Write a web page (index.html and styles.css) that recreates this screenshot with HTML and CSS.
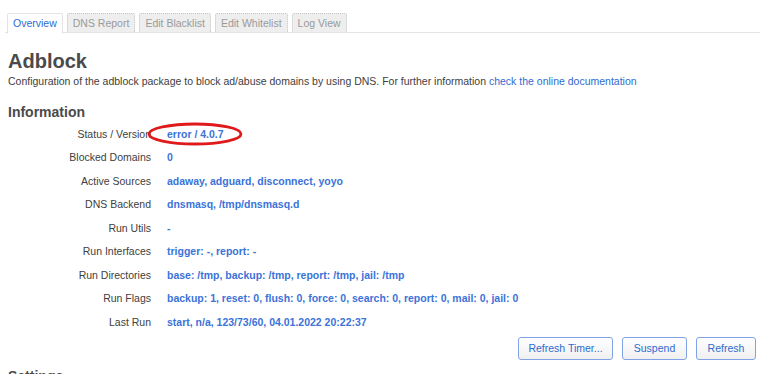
FILE: index.html
```html
<!DOCTYPE html>
<html>
<head>
<meta charset="utf-8">
<link rel="stylesheet" href="styles.css">
</head>
<body>
<div class="page">
  <ul class="tabs">
    <li class="tab active">Overview</li>
    <li class="tab">DNS Report</li>
    <li class="tab">Edit Blacklist</li>
    <li class="tab">Edit Whitelist</li>
    <li class="tab">Log View</li>
  </ul>
  <h1 class="title">Adblock</h1>
  <p class="desc">Configuration of the adblock package to block ad/abuse domains by using DNS. For further information <a class="link">check the online documentation</a></p>
  <h2 class="section">Information</h2>
  <div class="info">
    <div class="row"><span class="label">Status / Version</span><span class="value status">error / 4.0.7<svg class="ring" viewBox="0 0 96 24" width="96" height="24"><ellipse cx="48" cy="12" rx="46" ry="10" fill="none" stroke="#e01a1a" stroke-width="2.8"/></svg></span></div>
    <div class="row"><span class="label">Blocked Domains</span><span class="value">0</span></div>
    <div class="row"><span class="label">Active Sources</span><span class="value">adaway, adguard, disconnect, yoyo</span></div>
    <div class="row"><span class="label">DNS Backend</span><span class="value">dnsmasq, /tmp/dnsmasq.d</span></div>
    <div class="row"><span class="label">Run Utils</span><span class="value">-</span></div>
    <div class="row"><span class="label">Run Interfaces</span><span class="value">trigger: -, report: -</span></div>
    <div class="row"><span class="label">Run Directories</span><span class="value">base: /tmp, backup: /tmp, report: /tmp, jail: /tmp</span></div>
    <div class="row"><span class="label">Run Flags</span><span class="value">backup: 1, reset: 0, flush: 0, force: 0, search: 0, report: 0, mail: 0, jail: 0</span></div>
    <div class="row"><span class="label">Last Run</span><span class="value">start, n/a, 123/73/60, 04.01.2022 20:22:37</span></div>
  </div>
  <div class="actions">
    <button class="btn btn-timer">Refresh Timer...</button>
    <button class="btn btn-suspend">Suspend</button>
    <button class="btn btn-refresh">Refresh</button>
  </div>
  <h2 class="section settings">Settings</h2>
</div>
</body>
</html>
```
FILE: styles.css
```css
html, body {
  margin: 0;
  padding: 0;
  background: #fff;
}
body {
  font-family: "Liberation Sans", Arial, sans-serif;
  color: #404040;
  overflow: hidden;
  height: 374px;
}
.page {
  padding: 13px 8px 0 8px;
}
.tabs {
  list-style: none;
  margin: 0 0 0 -3px;
  padding: 0 0 0 2px;
  display: flex;
  gap: 4px;
  border-bottom: 1px solid #e4e4e4;
  height: 19px;
}
.tab {
  font-size: 10.5px;
  line-height: 18px;
  height: 18px;
  padding: 0 5px;
  color: #9a9a9a;
  background: #eeeeee;
  border: 1px dotted #c8c8c8;
  border-bottom: none;
  border-radius: 2px 2px 0 0;
}
.tab.active {
  color: #2f6bd0;
  background: #fff;
  border: 1px solid #e4e4e4;
  border-bottom: 1px solid #fff;
  height: 19px;
}
.title {
  font-size: 20px;
  font-weight: bold;
  color: #4a4a4a;
  margin: 16px 0 0 0;
  line-height: 24px;
}
.desc {
  font-size: 10.5px;
  margin: 0;
  line-height: 16px;
  color: #404040;
}
.link {
  color: #2f6bd0;
}
.section {
  font-size: 14px;
  font-weight: bold;
  color: #4a4a4a;
  margin: 14px 0 0 0;
  line-height: 18px;
}
.info {
  display: flex;
  flex-direction: column;
  margin-top: 1px;
}
.row {
  display: flex;
  align-items: center;
  height: 23.5px;
  font-size: 10.5px;
}
.label {
  width: 143px;
  text-align: right;
  color: #404040;
}
.value {
  margin-left: 16px;
  color: #3b73d8;
  font-weight: bold;
}
.status {
  position: relative;
}
.ring {
  position: absolute;
  left: -20px;
  top: calc(50% - 12px);
}
.actions {
  display: flex;
  justify-content: flex-end;
  gap: 9px;
  margin-top: 3px;
  padding-right: 4px;
}
.btn {
  font-family: "Liberation Sans", Arial, sans-serif;
  font-size: 10.5px;
  color: #2f6bd0;
  background: linear-gradient(#ffffff, #f0f0f0);
  border: 1px solid #7fa3e6;
  border-radius: 3px;
  height: 23px;
  padding: 0;
}
.btn-timer { width: 95px; }
.btn-suspend { width: 65px; }
.btn-refresh { width: 60px; }
.settings {
  margin-top: 7px;
}
```
